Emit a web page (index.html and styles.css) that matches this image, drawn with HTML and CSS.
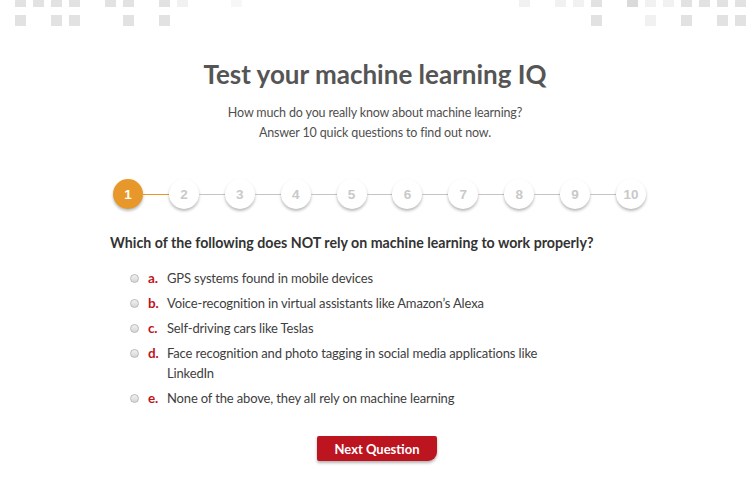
FILE: index.html
```html
<!DOCTYPE html>
<html lang="en">
<head>
<meta charset="utf-8">
<title>Test your machine learning IQ</title>
<link rel="stylesheet" href="styles.css">
</head>
<body>
<div class="pattern">
  <svg width="750" height="26" viewBox="0 0 750 26" xmlns="http://www.w3.org/2000/svg">
    <g fill="#e2e2e2">
      <rect x="15" y="-4" width="11" height="11"/><rect x="33" y="-4" width="11" height="11"/>
      <rect x="51" y="-4" width="11" height="11"/><rect x="69" y="-4" width="11" height="11"/>
      <rect x="105" y="-4" width="11" height="11"/><rect x="123" y="-4" width="11" height="11"/>
      <rect x="159" y="-4" width="11" height="11"/>
      <rect x="15" y="15" width="11" height="11"/><rect x="51" y="15" width="11" height="11"/>
      <rect x="69" y="15" width="11" height="11"/><rect x="123" y="15" width="11" height="11"/>
      <rect x="159" y="15" width="11" height="11"/>
      <rect x="591" y="-4" width="11" height="11"/><rect x="681" y="-4" width="11" height="11"/>
      <rect x="699" y="-4" width="11" height="11"/><rect x="717" y="-4" width="11" height="11"/>
      <rect x="735" y="-4" width="11" height="11"/>
      <rect x="591" y="15" width="11" height="11"/><rect x="681" y="15" width="11" height="11"/>
      <rect x="717" y="15" width="11" height="11"/><rect x="735" y="15" width="11" height="11"/>
    </g>
    <g fill="#dadada">
      <rect x="627" y="-4" width="11" height="11"/>
    </g>
    <g fill="#f1f1f1">
      <rect x="177" y="-4" width="11" height="11"/><rect x="519" y="-4" width="11" height="11"/>
      <rect x="555" y="-4" width="11" height="11"/><rect x="573" y="-4" width="11" height="11"/>
      <rect x="645" y="-4" width="11" height="11"/><rect x="663" y="-4" width="11" height="11"/>
      <rect x="645" y="15" width="11" height="11"/>
    </g>
    <g fill="#f7f7f7">
      <rect x="231" y="-4" width="11" height="11"/>
    </g>
  </svg>
</div>
<main class="page">
  <h1 class="title">Test your machine learning IQ</h1>
  <p class="intro">How much do you really know about machine learning?<br>Answer 10 quick questions to find out now.</p>

  <div class="stepper">
    <span class="step active">1</span><span class="link done"></span>
    <span class="step">2</span><span class="link"></span>
    <span class="step">3</span><span class="link"></span>
    <span class="step">4</span><span class="link"></span>
    <span class="step">5</span><span class="link"></span>
    <span class="step">6</span><span class="link"></span>
    <span class="step">7</span><span class="link"></span>
    <span class="step">8</span><span class="link"></span>
    <span class="step">9</span><span class="link"></span>
    <span class="step">10</span>
  </div>

  <h2 class="question">Which of the following does NOT rely on machine learning to work properly?</h2>

  <ul class="options">
    <li class="option"><span class="radio"></span><span class="letter">a.</span><span class="text">GPS systems found in mobile devices</span></li>
    <li class="option"><span class="radio"></span><span class="letter">b.</span><span class="text">Voice-recognition in virtual assistants like Amazon’s Alexa</span></li>
    <li class="option"><span class="radio"></span><span class="letter">c.</span><span class="text">Self-driving cars like Teslas</span></li>
    <li class="option"><span class="radio"></span><span class="letter">d.</span><span class="text">Face recognition and photo tagging in social media applications like LinkedIn</span></li>
    <li class="option"><span class="radio"></span><span class="letter">e.</span><span class="text">None of the above, they all rely on machine learning</span></li>
  </ul>

  <div class="actions">
    <button class="next" type="button">Next Question</button>
  </div>
</main>
</body>
</html>
```

FILE: styles.css
```css
* { box-sizing: border-box; }
html, body { margin: 0; padding: 0; background: #fff; }
body {
  font-family: Lato, "Open Sans", "Liberation Sans", sans-serif;
  color: #4a4a4a;
  width: 750px;
  height: 497px;
  overflow: hidden;
}
.pattern svg { display: block; }

.page {
  width: 530px;
  margin: 0 auto;
}
.title {
  margin: 32px 0 0;
  font-size: 26px;
  line-height: 32px;
  font-weight: 700;
  color: #555;
  text-align: center;
}
.intro {
  margin: 13px 0 0;
  font-size: 12.5px;
  letter-spacing: -0.15px;
  line-height: 20px;
  color: #4f4f4f;
  text-align: center;
}

.stepper {
  display: flex;
  align-items: center;
  width: 533px;
  margin: 36px 0 0 3px;
}
.step {
  flex: none;
  width: 30px;
  height: 30px;
  border-radius: 50%;
  background: #fff;
  box-shadow: 0 2px 3px rgba(0,0,0,0.28);
  display: flex;
  align-items: center;
  justify-content: center;
  font-family: "Liberation Sans", Arial, sans-serif;
  font-weight: 700;
  font-size: 13.5px;
  color: #c9c9c9;
}
.step.active {
  background: #e8982a;
  color: #fff;
}
.link {
  flex: 1;
  height: 1px;
  background: #c9c2c2;
}
.link.done { background: #e8982a; }

.question {
  margin: 24px 0 0;
  font-size: 14.2px;
  line-height: 20px;
  font-weight: 700;
  color: #333;
}

.options {
  list-style: none;
  margin: 15px 0 0;
  padding: 0 0 0 20px;
  width: 460px;
}
.option {
  display: flex;
  align-items: flex-start;
  font-size: 13px;
  letter-spacing: -0.15px;
  line-height: 20px;
  color: #404040;
  margin-bottom: 5px;
}
.option:last-child { margin-top: 1px; }
.radio {
  flex: none;
  width: 9px;
  height: 9px;
  margin-top: 6px;
  border-radius: 50%;
  border: 1px solid #b9b9b9;
  background: linear-gradient(#f2f2f2, #d6d6d6);
}
.letter {
  flex: none;
  width: 19px;
  margin-left: 9px;
  color: #c0141c;
  font-weight: 700;
  font-size: 13.5px;
}
.text { flex: 1; }

.actions {
  display: flex;
  justify-content: center;
  margin: 28px 0 0 4px;
}
.next {
  width: 120px;
  height: 25px;
  border: 0;
  padding: 0;
  background: #bd1520;
  color: #fff;
  font-family: Lato, "Liberation Sans", sans-serif;
  font-weight: 700;
  font-size: 13px;
  border-radius: 2px 2px 9px 2px;
  box-shadow: 0 2px 3px rgba(0,0,0,0.3);
  cursor: pointer;
}
```
